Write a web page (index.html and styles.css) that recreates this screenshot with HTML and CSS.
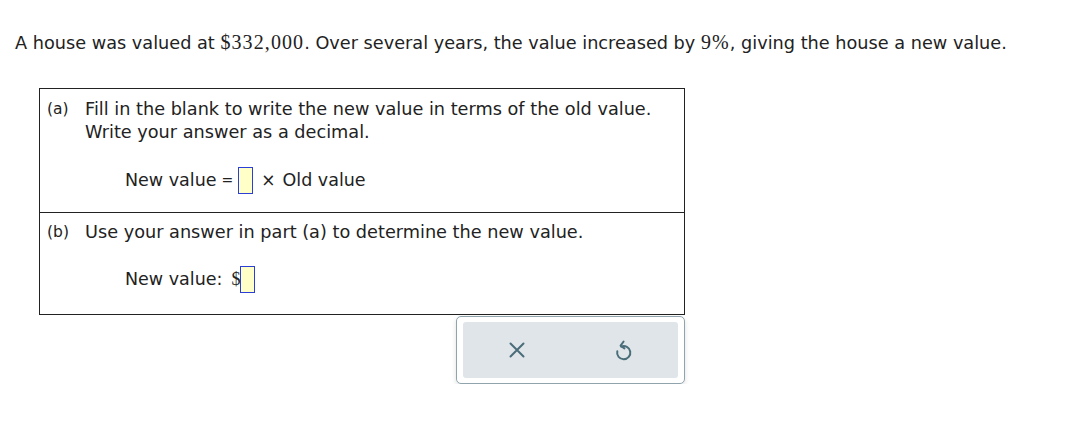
FILE: index.html
```html
<!DOCTYPE html>
<html>
<head>
<meta charset="utf-8">
<link rel="stylesheet" href="styles.css">
</head>
<body>
<div class="page">
  <p class="intro">A house was valued at <span class="num">$332,000</span>. Over several years, the value increased by <span class="num">9%</span>, giving the house a new value.</p>
  <div class="parts">
    <div class="part part-a">
      <div class="row">
        <span class="label">(a)</span>
        <div class="body">
          <div>Fill in the blank to write the new value in terms of the old value.</div>
          <div>Write your answer as a decimal.</div>
        </div>
      </div>
      <div class="answer">New value<span class="eq">=</span><span class="blank"></span><span class="times">×</span>Old value</div>
    </div>
    <div class="part part-b">
      <div class="row">
        <span class="label">(b)</span>
        <div class="body">Use your answer in part (a) to determine the new value.</div>
      </div>
      <div class="answer">New value:<span class="dollar">$</span><span class="blank"></span></div>
    </div>
  </div>
  <div class="actions-row">
    <div class="actions">
      <div class="actions-inner">
        <button class="btn" aria-label="clear">
          <svg width="16" height="16" viewBox="0 0 16 16"><path d="M1.5 1.5 L14.5 14.5 M14.5 1.5 L1.5 14.5" stroke="#4a6d7a" stroke-width="2" fill="none" stroke-linecap="round"/></svg>
        </button>
        <button class="btn" aria-label="undo">
          <svg width="18" height="21" viewBox="0 0 18 21"><path d="M6.2 6.6 A6.6 6.6 0 1 1 2.3 11.2" stroke="#4a6d7a" stroke-width="2" fill="none" stroke-linecap="round"/><path d="M8.6 1.5 L5.6 5.7 L9.4 8.4" stroke="#4a6d7a" stroke-width="2" fill="none" stroke-linecap="round" stroke-linejoin="round"/></svg>
        </button>
      </div>
    </div>
  </div>
</div>
</body>
</html>
```
FILE: styles.css
```css
* { box-sizing: border-box; }
body {
  margin: 0;
  background: #fff;
  font-family: Verdana, "DejaVu Sans", sans-serif;
  color: #222;
}
.page {
  padding: 30px 0 0 15px;
}
.intro {
  margin: 0;
  font-size: 17.7px;
  line-height: 24px;
}
.num {
  font-family: "Liberation Serif", "Times New Roman", serif;
  font-size: 20px;
  letter-spacing: 1.1px;
}
.parts {
  margin-top: 33px;
  margin-left: 24px;
  width: 646px;
  border: 1px solid #222;
}
.part-a {
  padding: 9px 0 18px 7px;
  border-bottom: 1px solid #222;
}
.part-b {
  padding: 8px 0 21px 7px;
}
.row {
  display: flex;
  font-size: 17.7px;
  line-height: 23px;
}
.label {
  width: 38px;
  font-size: 15.5px;
}
.answer {
  margin-left: 78px;
  margin-top: 23px;
  font-size: 17.5px;
  line-height: 27px;
  display: flex;
  align-items: center;
}
.part-b .answer { margin-top: 22px; }
.eq { font-size: 14px; margin: 0 5px 0 5px; }
.times { margin: 0 7px 0 8px; font-size: 17px; }
.dollar {
  font-family: "Liberation Serif", "Times New Roman", serif;
  font-size: 18px;
  margin-left: 9px;
}
.blank {
  display: inline-block;
  width: 15px;
  height: 27px;
  border: 1px solid #2b3fd6;
  background: #ffffc8;
}
.actions-row {
  width: 670px;
  display: flex;
  justify-content: flex-end;
  margin-top: 1px;
}
.actions {
  width: 229px;
  height: 68px;
  border: 1px solid #8fa4ad;
  border-radius: 5px;
  padding: 5px 6px;
  background: #fff;
  box-shadow: 0 2px 5px rgba(0,0,0,0.12);
}
.actions-inner {
  height: 100%;
  background: #dfe5e8;
  border-radius: 3px;
  display: flex;
}
.btn {
  flex: 1;
  border: 0;
  background: transparent;
  display: flex;
  align-items: center;
  justify-content: center;
  padding: 0;
}
```
